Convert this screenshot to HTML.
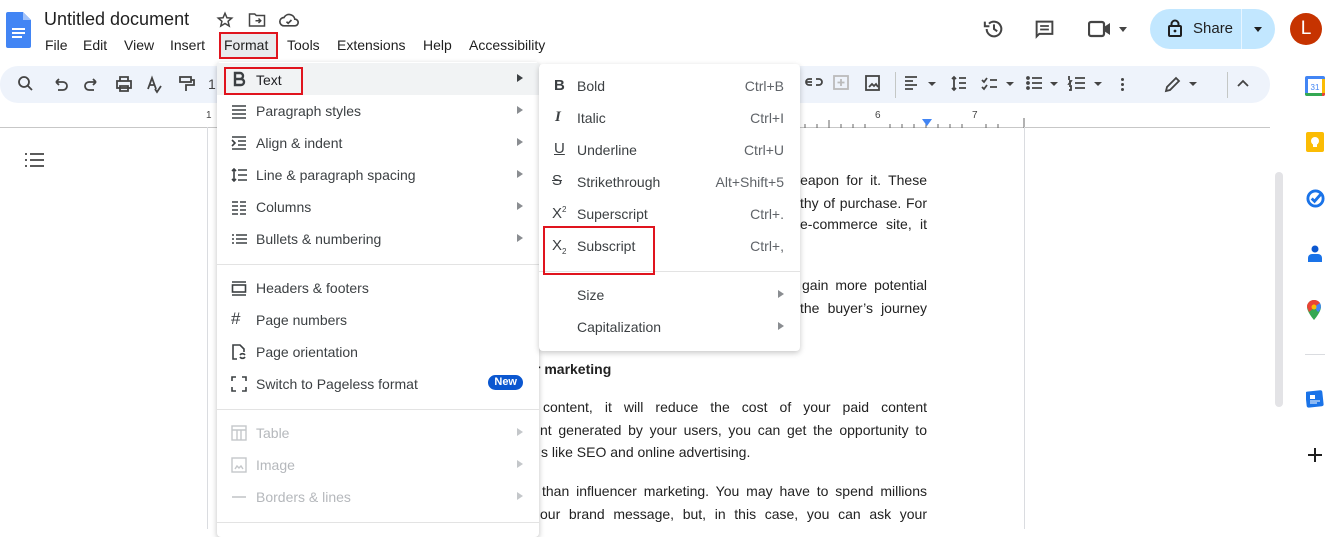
<!DOCTYPE html>
<html><head><meta charset="utf-8"><style>
*{margin:0;padding:0;box-sizing:border-box}
body{width:1342px;height:529px;overflow:hidden;background:#fff;font-family:"Liberation Sans",Arial,sans-serif;color:#202124;position:relative}
.a{position:absolute}
.t{font-size:14px;white-space:nowrap}
.mi{position:absolute;left:0;width:100%;height:32px;font-size:14px;color:#3c4043}
.mi .ic{position:absolute;left:14px;top:8px;width:16px;height:16px}
.mi .lb{position:absolute;left:39px;top:8px}
.mi .ar{position:absolute;right:16px;top:11px;width:0;height:0;border-left:6px solid #8a8d91;border-top:4px solid transparent;border-bottom:4px solid transparent}
.dis{color:#b5b8bc}
.dis .ar{border-left-color:#c4c7ca}
.sc{position:absolute;right:16px;top:8px;color:#5f6368}
.div{position:absolute;left:0;width:100%;height:1px;background:#e3e3e3}
.doc{position:absolute;font-size:14px;color:#222;white-space:nowrap;text-align:justify;text-align-last:justify;overflow:hidden;height:20px}
</style></head><body>

<!-- logo -->
<svg class="a" style="left:6px;top:12px" width="25" height="36" viewBox="0 0 25 36"><path d="M2 0h15l8 8v26a2 2 0 0 1-2 2H2a2 2 0 0 1-2-2V2a2 2 0 0 1 2-2z" fill="#4285f4"/><path d="M17 0v8h8z" fill="#a1c2fa"/><rect x="6" y="16" width="13" height="2" fill="#fff"/><rect x="6" y="20" width="13" height="2" fill="#fff"/><rect x="6" y="24" width="10" height="2" fill="#fff"/></svg>
<div class="a" style="left:44px;top:9px;font-size:18px;color:#1f1f1f">Untitled document</div>
<svg class="a" style="left:216px;top:11px" width="18" height="18" viewBox="0 0 24 24"><path d="M12 3l2.6 6 6.4.5-4.9 4.2 1.5 6.3L12 16.6 6.4 20l1.5-6.3L3 9.5 9.4 9z" fill="none" stroke="#444" stroke-width="2"/></svg>
<svg class="a" style="left:248px;top:12px" width="18" height="16" viewBox="0 0 24 20"><path d="M2 2h7l2 2h11v14H2z" fill="none" stroke="#444" stroke-width="2"/><path d="M10 11h7M14 8l3 3-3 3" stroke="#444" stroke-width="2" fill="none"/></svg>
<svg class="a" style="left:279px;top:12px" width="20" height="16" viewBox="0 0 24 18"><path d="M6 16a5 5 0 0 1 0-10 7 7 0 0 1 13 2 4 4 0 0 1 0 8z" fill="none" stroke="#444" stroke-width="2"/><path d="M9 11l2 2 4-4" stroke="#444" stroke-width="2" fill="none"/></svg>

<div class="a t" style="left:45px;top:37px;color:#1f1f1f">File</div>
<div class="a t" style="left:83px;top:37px;color:#1f1f1f">Edit</div>
<div class="a t" style="left:124px;top:37px;color:#1f1f1f">View</div>
<div class="a t" style="left:170px;top:37px;color:#1f1f1f">Insert</div>
<div class="a" style="left:219px;top:32px;width:59px;height:27px;border:2px solid #e0141e;background:#e8eaed"></div>
<div class="a t" style="left:224px;top:37px;color:#1f1f1f">Format</div>
<div class="a t" style="left:287px;top:37px;color:#1f1f1f">Tools</div>
<div class="a t" style="left:337px;top:37px;color:#1f1f1f">Extensions</div>
<div class="a t" style="left:423px;top:37px;color:#1f1f1f">Help</div>
<div class="a t" style="left:469px;top:37px;color:#1f1f1f">Accessibility</div>

<!-- right header -->
<svg class="a" style="left:983px;top:18px" width="22" height="22" viewBox="0 0 24 24"><path d="M4 12a8 8 0 1 0 2.5-5.8" fill="none" stroke="#444" stroke-width="2.2"/><path d="M2 4v5h5" fill="none" stroke="#444" stroke-width="2.2"/><path d="M12 7v5l3.5 2.5" fill="none" stroke="#444" stroke-width="2.2"/></svg>
<svg class="a" style="left:1034px;top:19px" width="21" height="21" viewBox="0 0 24 24"><path d="M3 3h18v14H6l-3 3z" fill="none" stroke="#444" stroke-width="2.2"/><path d="M7 8h10M7 12h10" stroke="#444" stroke-width="2"/></svg>
<svg class="a" style="left:1088px;top:20px" width="24" height="18" viewBox="0 0 24 18"><rect x="1" y="2" width="15" height="14" rx="2" fill="none" stroke="#444" stroke-width="2.2"/><path d="M16 7l6-4v12l-6-4z" fill="#444"/></svg>
<div class="a" style="left:1119px;top:27px;border-top:5px solid #444;border-left:4px solid transparent;border-right:4px solid transparent"></div>
<div class="a" style="left:1150px;top:9px;width:125px;height:40px;border-radius:20px;background:#c2e7ff"></div>
<div class="a" style="left:1241px;top:9px;width:1px;height:40px;background:#e8f5ff"></div>
<svg class="a" style="left:1168px;top:19px" width="14" height="18" viewBox="0 0 14 18"><rect x="1" y="7" width="12" height="10" rx="1" fill="none" stroke="#1f1f1f" stroke-width="2"/><path d="M3.5 7V5a3.5 3.5 0 0 1 7 0v2" fill="none" stroke="#1f1f1f" stroke-width="2"/><circle cx="7" cy="12" r="1.4" fill="#1f1f1f"/></svg>
<div class="a" style="left:1193px;top:20px;font-size:15px;color:#1f1f1f">Share</div>
<div class="a" style="left:1254px;top:27px;border-top:5px solid #1f1f1f;border-left:4.5px solid transparent;border-right:4.5px solid transparent"></div>
<div class="a" style="left:1290px;top:13px;width:32px;height:32px;border-radius:50%;background:#c63300;color:#fff;font-size:19px;text-align:center;line-height:32px">L</div>

<!-- toolbar -->
<div class="a" style="left:0;top:66px;width:1270px;height:37px;border-radius:18px;background:#eef3fb"></div>
<svg class="a" style="left:0;top:66px" width="1270" height="37" viewBox="0 0 1270 37" fill="none" stroke="#444" stroke-width="1.8">
<circle cx="24" cy="16" r="5"/><path d="M28 20l4 4"/>
<path d="M56 16h7a4 4 0 0 1 0 8h-5M56 16l3-3M56 16l3 3"/>
<path d="M96 16h-7a4 4 0 0 0 0 8h5M96 16l-3-3M96 16l-3 3"/>
<rect x="117" y="15" width="14" height="7"/><path d="M120 15v-4h8v4M120 20h8v5h-8z"/>
<path d="M148 23l4-11 4 11M150 19h5M155 23l2 3 4-6"/>
<rect x="180" y="11" width="11" height="5"/><path d="M191 14h3v5h-8v6"/>
<path d="M812 19h-3a3 3 0 0 1 0-6h3M806 16h6M816 13h3a3 3 0 0 1 0 6h-3"/>
<rect x="834" y="10" width="14" height="13" stroke="#bbb"/><path d="M841 13v7M837.5 16.5h7" stroke="#bbb"/>
<rect x="866" y="10" width="13" height="14"/><path d="M869 21l3-3 2 2 2-2 2 3"/>
<path d="M905 11h12M905 15h8M905 19h12M905 23h8"/>
<path d="M954 11v13M952 13l2-2 2 2M952 22l2 2 2-2M959 12h7M959 17h7M959 22h7"/>
<path d="M982 14l2 2 3-4M982 21l2 2 3-4M990 14h7M990 21h7"/>
<path d="M1032 12h10M1032 17h10M1032 22h10"/><circle cx="1028" cy="12" r="1"/><circle cx="1028" cy="17" r="1"/><circle cx="1028" cy="22" r="1"/>
<path d="M1075 12h10M1075 17h10M1075 22h10M1069 10v4M1069 15h2l-2 3h2M1069 20h2v4h-2"/>
<path d="M1166 25l1-4 9-9 3 3-9 9z"/>
<path d="M1238 20l5-5 5 5"/>
</svg>
<div class="a" style="left:208px;top:76px;font-size:14px;color:#444">1</div>
<div class="a" style="left:1121px;top:78px;width:3px;height:3px;border-radius:50%;background:#444;box-shadow:0 5px 0 #444,0 10px 0 #444"></div>
<div class="a" style="left:895px;top:72px;width:1px;height:26px;background:#c4c7c5"></div>
<div class="a" style="left:1227px;top:72px;width:1px;height:26px;background:#c4c7c5"></div>
<div class="a" style="left:928px;top:82px;border-top:4px solid #444;border-left:4px solid transparent;border-right:4px solid transparent"></div>
<div class="a" style="left:1006px;top:82px;border-top:4px solid #444;border-left:4px solid transparent;border-right:4px solid transparent"></div>
<div class="a" style="left:1050px;top:82px;border-top:4px solid #444;border-left:4px solid transparent;border-right:4px solid transparent"></div>
<div class="a" style="left:1094px;top:82px;border-top:4px solid #444;border-left:4px solid transparent;border-right:4px solid transparent"></div>
<div class="a" style="left:1189px;top:82px;border-top:4px solid #444;border-left:4px solid transparent;border-right:4px solid transparent"></div>

<!-- ruler & page -->
<div class="a" style="left:0;top:127px;width:1270px;height:1px;background:#c7c7c7"></div>
<div class="a" style="left:206px;top:110px;font-size:10px;color:#444">1</div>
<div class="a" style="left:875px;top:110px;font-size:10px;color:#444">6</div>
<div class="a" style="left:972px;top:110px;font-size:10px;color:#444">7</div>
<svg class="a" style="left:800px;top:118px" width="230" height="10"><g stroke="#666" stroke-width="1">
<path d="M5 6v4M17 6v4M29 2v8M41 6v4M53 6v4M65 6v4M90 6v4M102 6v4M114 6v4M126 2v8M138 6v4M150 6v4M162 6v4M186 6v4M198 6v4M224 0v10"/></g></svg>
<div class="a" style="left:922px;top:119px;border-top:7px solid #4285f4;border-left:5px solid transparent;border-right:5px solid transparent"></div>
<div class="a" style="left:207px;top:127px;width:1px;height:402px;background:#dadce0"></div>
<div class="a" style="left:1024px;top:127px;width:1px;height:402px;background:#dadce0"></div>
<svg class="a" style="left:25px;top:153px" width="19" height="14" viewBox="0 0 19 14" stroke="#444" stroke-width="1.8"><path d="M5 1h14M5 7h14M5 13h14M0 1h2M0 7h2M0 13h2"/></svg>

<!-- document text -->
<div class="doc" style="top:172px;left:790px;width:137px">weapon for it. These</div>
<div class="doc" style="top:195px;left:800px;width:127px">thy of purchase. For</div>
<div class="doc" style="top:216px;left:800px;width:127px">e-commerce site, it</div>
<div class="doc" style="top:277px;left:802px;width:125px">gain more potential</div>
<div class="doc" style="top:300px;left:800px;width:127px">the buyer’s journey</div>
<div class="doc" style="top:361px;font-weight:bold;left:535px;text-align:left;text-align-last:left">r marketing</div>
<div class="doc" style="top:399px;left:543px;width:384px">content, it will reduce the cost of your paid content</div>
<div class="doc" style="top:422px;left:540px;width:387px">nt generated by your users, you can get the opportunity to</div>
<div class="doc" style="top:444px;left:541px;text-align:left;text-align-last:left">s like SEO and online advertising.</div>
<div class="doc" style="top:483px;left:542px;width:385px">than influencer marketing. You may have to spend millions</div>
<div class="doc" style="top:506px;left:540px;width:387px">our brand message, but, in this case, you can ask your</div>

<!-- scrollbar & side panel -->
<div class="a" style="left:1275px;top:172px;width:8px;height:235px;border-radius:4px;background:#e3e3e6"></div>
<svg class="a" style="left:1305px;top:76px" width="20" height="20" viewBox="0 0 20 20"><rect width="20" height="20" rx="2" fill="#4285f4"/><rect x="3" y="3" width="14" height="14" fill="#fff"/><path d="M0 17h17v3H2a2 2 0 0 1-2-2z" fill="#34a853"/><path d="M17 17h3v1a2 2 0 0 1-2 2h-1z" fill="#ea4335"/><path d="M17 3h3v14h-3z" fill="#fbbc04"/><text x="10" y="14" font-size="8" text-anchor="middle" fill="#4285f4" font-family="Liberation Sans">31</text></svg>
<svg class="a" style="left:1306px;top:132px" width="18" height="20"><rect width="18" height="20" rx="2" fill="#fbbc04"/><circle cx="9" cy="9" r="4" fill="#fff"/><rect x="7" y="12" width="4" height="3" fill="#fff"/></svg>
<svg class="a" style="left:1306px;top:189px" width="19" height="19" viewBox="0 0 20 20"><circle cx="10" cy="10" r="8" fill="none" stroke="#1a73e8" stroke-width="3"/><path d="M6 10l3 3 7-8" fill="none" stroke="#1a73e8" stroke-width="3"/></svg>
<svg class="a" style="left:1308px;top:245px" width="14" height="18"><circle cx="7" cy="4" r="3.5" fill="#0b57d0"/><path d="M0 17v-4a4 4 0 0 1 4-4h6a4 4 0 0 1 4 4v4z" fill="#1a73e8"/></svg>
<svg class="a" style="left:1307px;top:300px" width="14" height="20" viewBox="0 0 14 20"><path d="M7 0a7 7 0 0 1 7 7c0 5-7 13-7 13S0 12 0 7a7 7 0 0 1 7-7z" fill="#34a853"/><path d="M7 0a7 7 0 0 1 6 3L2 12 0 7a7 7 0 0 1 7-7z" fill="#ea4335"/><path d="M13 3a7 7 0 0 1-2 9L7 7z" fill="#4285f4"/><circle cx="7" cy="7" r="2.5" fill="#fbbc04"/></svg>
<div class="a" style="left:1305px;top:354px;width:20px;height:1px;background:#dadce0"></div>
<svg class="a" style="left:1306px;top:389px" width="20" height="19"><rect x="0" y="2" width="17" height="16" rx="2" fill="#1a73e8" transform="rotate(-6 8 10)"/><rect x="4" y="6" width="5" height="4" fill="#fff"/><path d="M4 12h10M4 14h7" stroke="#fff"/></svg>
<svg class="a" style="left:1308px;top:448px" width="14" height="14" stroke="#1f1f1f" stroke-width="2"><path d="M7 0v14M0 7h14"/></svg>

<!-- Format menu -->
<div class="a" style="left:217px;top:62px;width:322px;height:475px;background:#fff;box-shadow:0 2px 6px rgba(0,0,0,.25);border-radius:4px">
  <div class="mi" style="top:1px;background:#f1f3f4"><svg class="ic" viewBox="0 0 16 16"><path d="M4 2h5a3 3 0 0 1 0 6H4zM4 8h6a3 3 0 0 1 0 6H4z" fill="none" stroke="#3c4043" stroke-width="2.4"/></svg><span class="lb" style="top:9px;color:#202124">Text</span><span class="ar" style="border-left-color:#3c4043"></span></div>
  <div class="mi" style="top:33px"><svg class="ic" viewBox="0 0 16 16" stroke="#3c4043" stroke-width="1.6"><path d="M1 3h14M1 7h14M1 11h14M1 15h14"/></svg><span class="lb">Paragraph styles</span><span class="ar"></span></div>
  <div class="mi" style="top:65px"><svg class="ic" viewBox="0 0 16 16" stroke="#3c4043" stroke-width="1.6"><path d="M1 2h14M7 6h8M7 10h8M1 14h14"/><path d="M1 5l3 3-3 3" fill="none"/></svg><span class="lb">Align &amp; indent</span><span class="ar"></span></div>
  <div class="mi" style="top:97px"><svg class="ic" viewBox="0 0 16 16" stroke="#3c4043" stroke-width="1.6" fill="none"><path d="M3 2v12M1 4l2-2 2 2M1 12l2 2 2-2M7 3h9M7 8h9M7 13h9"/></svg><span class="lb">Line &amp; paragraph spacing</span><span class="ar"></span></div>
  <div class="mi" style="top:129px"><svg class="ic" viewBox="0 0 16 16" stroke="#3c4043" stroke-width="1.6"><path d="M1 3h6M1 7h6M1 11h6M1 15h6M9 3h6M9 7h6M9 11h6M9 15h6"/></svg><span class="lb">Columns</span><span class="ar"></span></div>
  <div class="mi" style="top:161px"><svg class="ic" viewBox="0 0 16 16" stroke="#3c4043" stroke-width="1.6"><path d="M1 4h2M1 8h2M1 12h2M5 4h11M5 8h11M5 12h11"/></svg><span class="lb">Bullets &amp; numbering</span><span class="ar"></span></div>
  <div class="div" style="top:202px"></div>
  <div class="mi" style="top:210px"><svg class="ic" viewBox="0 0 16 16" stroke="#3c4043" stroke-width="1.6" fill="none"><path d="M1 2h14M1 15h14"/><rect x="1.5" y="5" width="13" height="7"/></svg><span class="lb">Headers &amp; footers</span></div>
  <div class="mi" style="top:242px"><span class="ic" style="font-size:17px;top:5px;left:14px">#</span><span class="lb">Page numbers</span></div>
  <div class="mi" style="top:274px"><svg class="ic" viewBox="0 0 16 16" stroke="#3c4043" stroke-width="1.6" fill="none"><path d="M6 15H2V1h7l4 4v3"/><path d="M9 11a3 3 0 0 1 5 0M14 13a3 3 0 0 1-5 0"/></svg><span class="lb">Page orientation</span></div>
  <div class="mi" style="top:306px"><svg class="ic" viewBox="0 0 16 16" stroke="#3c4043" stroke-width="1.6" fill="none"><path d="M1 5V1h4M11 1h4v4M15 11v4h-4M5 15H1v-4"/></svg><span class="lb">Switch to Pageless format</span><span class="a" style="right:16px;top:7px;background:#0b57d0;color:#fff;font-size:11px;font-weight:bold;border-radius:8px;padding:1px 6px 2px">New</span></div>
  <div class="div" style="top:347px"></div>
  <div class="mi dis" style="top:355px"><svg class="ic" viewBox="0 0 16 16" stroke="#c4c7ca" stroke-width="1.4" fill="none"><rect x="1" y="1" width="14" height="14"/><path d="M1 5h14M6 5v10M10 5v10"/></svg><span class="lb">Table</span><span class="ar"></span></div>
  <div class="mi dis" style="top:387px"><svg class="ic" viewBox="0 0 16 16" stroke="#c4c7ca" stroke-width="1.4" fill="none"><rect x="1" y="1" width="14" height="14"/><path d="M4 12l2-3 2 2 2-2 2 3"/></svg><span class="lb">Image</span><span class="ar"></span></div>
  <div class="mi dis" style="top:419px"><svg class="ic" viewBox="0 0 16 16" stroke="#c4c7ca" stroke-width="1.6"><path d="M1 8h14"/></svg><span class="lb">Borders &amp; lines</span><span class="ar"></span></div>
  <div class="div" style="top:460px"></div>
</div>
<div class="a" style="left:224px;top:67px;width:79px;height:28px;border:2px solid #e0141e"></div>

<!-- Text submenu -->
<div class="a" style="left:539px;top:64px;width:261px;height:287px;background:#fff;box-shadow:0 2px 6px rgba(0,0,0,.22);border-radius:4px">
  <div class="mi" style="top:6px"><span class="ic" style="font-weight:bold;font-size:15px;top:7px;left:15px;color:#3c4043">B</span><span class="lb" style="left:38px">Bold</span><span class="sc">Ctrl+B</span></div>
  <div class="mi" style="top:38px"><span class="ic" style="font-style:italic;font-weight:bold;font-size:15px;top:7px;left:16px;font-family:'Liberation Serif',serif">I</span><span class="lb" style="left:38px">Italic</span><span class="sc">Ctrl+I</span></div>
  <div class="mi" style="top:70px"><span class="ic" style="font-size:15px;top:6px;left:15px;text-decoration:underline">U</span><span class="lb" style="left:38px">Underline</span><span class="sc">Ctrl+U</span></div>
  <div class="mi" style="top:102px"><span class="ic" style="font-size:15px;top:6px;left:13px;text-decoration:line-through">S</span><span class="lb" style="left:38px">Strikethrough</span><span class="sc">Alt+Shift+5</span></div>
  <div class="mi" style="top:134px"><span class="ic" style="font-size:15px;top:7px;left:13px">X<sup style="font-size:8px">2</sup></span><span class="lb" style="left:38px">Superscript</span><span class="sc">Ctrl+.</span></div>
  <div class="mi" style="top:166px"><span class="ic" style="font-size:15px;top:7px;left:13px">X<sub style="font-size:8px">2</sub></span><span class="lb" style="left:38px">Subscript</span><span class="sc">Ctrl+,</span></div>
  <div class="div" style="top:207px"></div>
  <div class="mi" style="top:215px"><span class="lb" style="left:38px">Size</span><span class="ar"></span></div>
  <div class="mi" style="top:247px"><span class="lb" style="left:38px">Capitalization</span><span class="ar"></span></div>
</div>
<div class="a" style="left:543px;top:226px;width:112px;height:49px;border:2px solid #e0141e"></div>

</body></html>
